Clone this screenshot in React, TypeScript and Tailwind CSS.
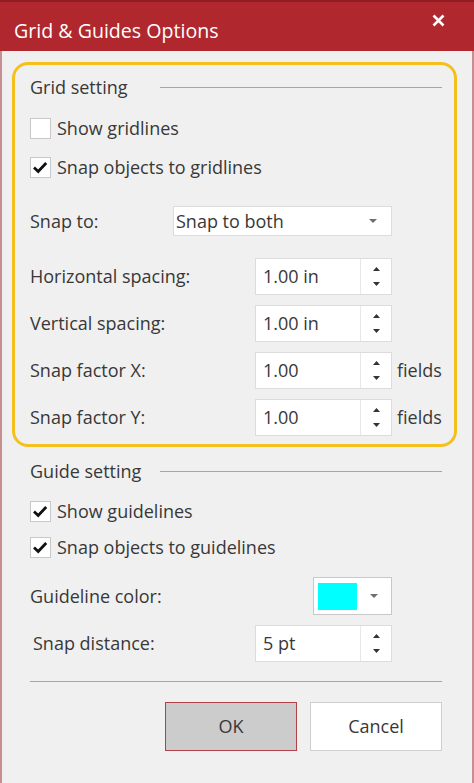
import type { ReactNode } from 'react';

function Check({ checked }: { checked: boolean }) {
  return (
    <div className="flex h-[21px] w-[21px] items-center justify-center border border-[#c8c8c8] bg-white">
      {checked && (
        <svg width="19" height="19" viewBox="0 0 19 19" aria-hidden="true">
          <path d="M3 9.5 7.2 13.5 15.2 5" fill="none" stroke="#111" strokeWidth="2.8" />
        </svg>
      )}
    </div>
  );
}

function CheckRow({ checked, label, className }: { checked: boolean; label: string; className: string }) {
  return (
    <div className={`flex h-[26px] items-center gap-[6px] ${className}`}>
      <Check checked={checked} />
      <span>{label}</span>
    </div>
  );
}

function Caret() {
  return (
    <svg width="8" height="4" viewBox="0 0 8 4" aria-hidden="true">
      <path d="M0 0h8L4 4z" fill="#6e6e6e" />
    </svg>
  );
}

function Spin({ value }: { value: string }) {
  return (
    <div className="flex h-full w-[137px] border border-[#dcdcdc] bg-white">
      <div className="flex flex-1 items-center pl-[7px]">{value}</div>
      <div className="flex w-[31px] flex-col items-center justify-center gap-[11px] border-l border-[#e8e8e8]">
        <svg width="7" height="4" viewBox="0 0 7 4" aria-hidden="true">
          <path d="M0 4h7L3.5 0z" fill="#333" />
        </svg>
        <svg width="7" height="4" viewBox="0 0 7 4" aria-hidden="true">
          <path d="M0 0h7L3.5 4z" fill="#333" />
        </svg>
      </div>
    </div>
  );
}

function Row({
  label,
  children,
  suffix,
  className,
  labelClass = '',
}: {
  label: string;
  children: ReactNode;
  suffix?: string;
  className: string;
  labelClass?: string;
}) {
  return (
    <div className={`flex items-center ${className}`}>
      <span className={`flex-1 ${labelClass}`}>{label}</span>
      <div className="flex h-full items-center">{children}</div>
      <span className="w-[50px] pl-[5px]">{suffix}</span>
    </div>
  );
}

function SectionHeader({ title, className }: { title: string; className: string }) {
  return (
    <div className={`flex h-[26px] items-center ${className}`}>
      <span className="w-[130px]">{title}</span>
      <div className="h-px flex-1 bg-[#a6a6a6]" />
    </div>
  );
}

export default function App() {
  return (
    <div className="flex h-[783px] w-[474px] flex-col bg-[#f0f0f0] font-['Open_Sans',sans-serif] text-[18px] text-[#383838]">
      <div className="flex h-[51px] shrink-0 items-start justify-between border-t-2 border-[#8f1d22] bg-[#b1272e] pl-[14px] pr-[29px] text-white">
        <span className="mt-[14px] text-[19.6px]">Grid &amp; Guides Options</span>
        <svg className="mt-[12px]" width="13" height="13" viewBox="0 0 13 13" aria-hidden="true">
          <path d="M1.5 1.5l10 10M11.5 1.5l-10 10" stroke="#fff" strokeWidth="2.6" />
        </svg>
      </div>

      <div className="flex flex-1 flex-col border-x-2 border-[#c78e92]">
        <div className="ml-[10px] mt-[11px] flex w-[445px] flex-col rounded-[16px] border-[3px] border-[#f4c01e] pb-[8px] pl-[15px] pr-[12px] pt-[9px]">
          <SectionHeader title="Grid setting" className="" />
          <CheckRow checked={false} label="Show gridlines" className="mt-[15px]" />
          <CheckRow checked label="Snap objects to gridlines" className="mt-[13px]" />

          <Row label="Snap to:" className="mt-[26px] h-[30px]">
            <div className="flex h-full w-[219px] items-center justify-between border border-[#dcdcdc] bg-white pl-[2px] pr-[14px]">
              <span>Snap to both</span>
              <Caret />
            </div>
          </Row>

          <Row label="Horizontal spacing:" className="mt-[22px] h-[37px]">
            <Spin value="1.00 in" />
          </Row>
          <Row label="Vertical spacing:" className="mt-[10px] h-[37px]">
            <Spin value="1.00 in" />
          </Row>
          <Row label="Snap factor X:" suffix="fields" className="mt-[10px] h-[37px]">
            <Spin value="1.00" />
          </Row>
          <Row label="Snap factor Y:" suffix="fields" className="mt-[10px] h-[37px]">
            <Spin value="1.00" />
          </Row>
        </div>

        <div className="flex flex-col pl-[28px] pr-[30px]">
          <SectionHeader title="Guide setting" className="mt-[11px]" />
          <CheckRow checked label="Show guidelines" className="mt-[14px]" />
          <CheckRow checked label="Snap objects to guidelines" className="mt-[10px]" />

          <Row label="Guideline color:" className="mt-[17px] h-[38px]">
            <div className="flex h-full w-[79px] items-center border border-[#c8c8c8] bg-white pl-[4px]">
              <div className="h-[27px] w-[39px] bg-[#00ffff]" />
              <div className="flex flex-1 justify-center">
                <Caret />
              </div>
            </div>
          </Row>
          <Row label="Snap distance:" labelClass="pl-[3px]" className="mt-[10px] h-[37px]">
            <Spin value="5 pt" />
          </Row>

          <div className="mt-[19px] h-px bg-[#a6a6a6]" />

          <div className="mt-[20px] flex justify-end gap-[13px]">
            <button
              type="button"
              className="h-[49px] w-[132px] border border-[#b0434a] bg-[#cccccc] text-[#383838]"
            >
              OK
            </button>
            <button
              type="button"
              className="h-[49px] w-[132px] border border-[#cfcfcf] bg-white text-[#383838]"
            >
              Cancel
            </button>
          </div>
        </div>
      </div>
    </div>
  );
}
